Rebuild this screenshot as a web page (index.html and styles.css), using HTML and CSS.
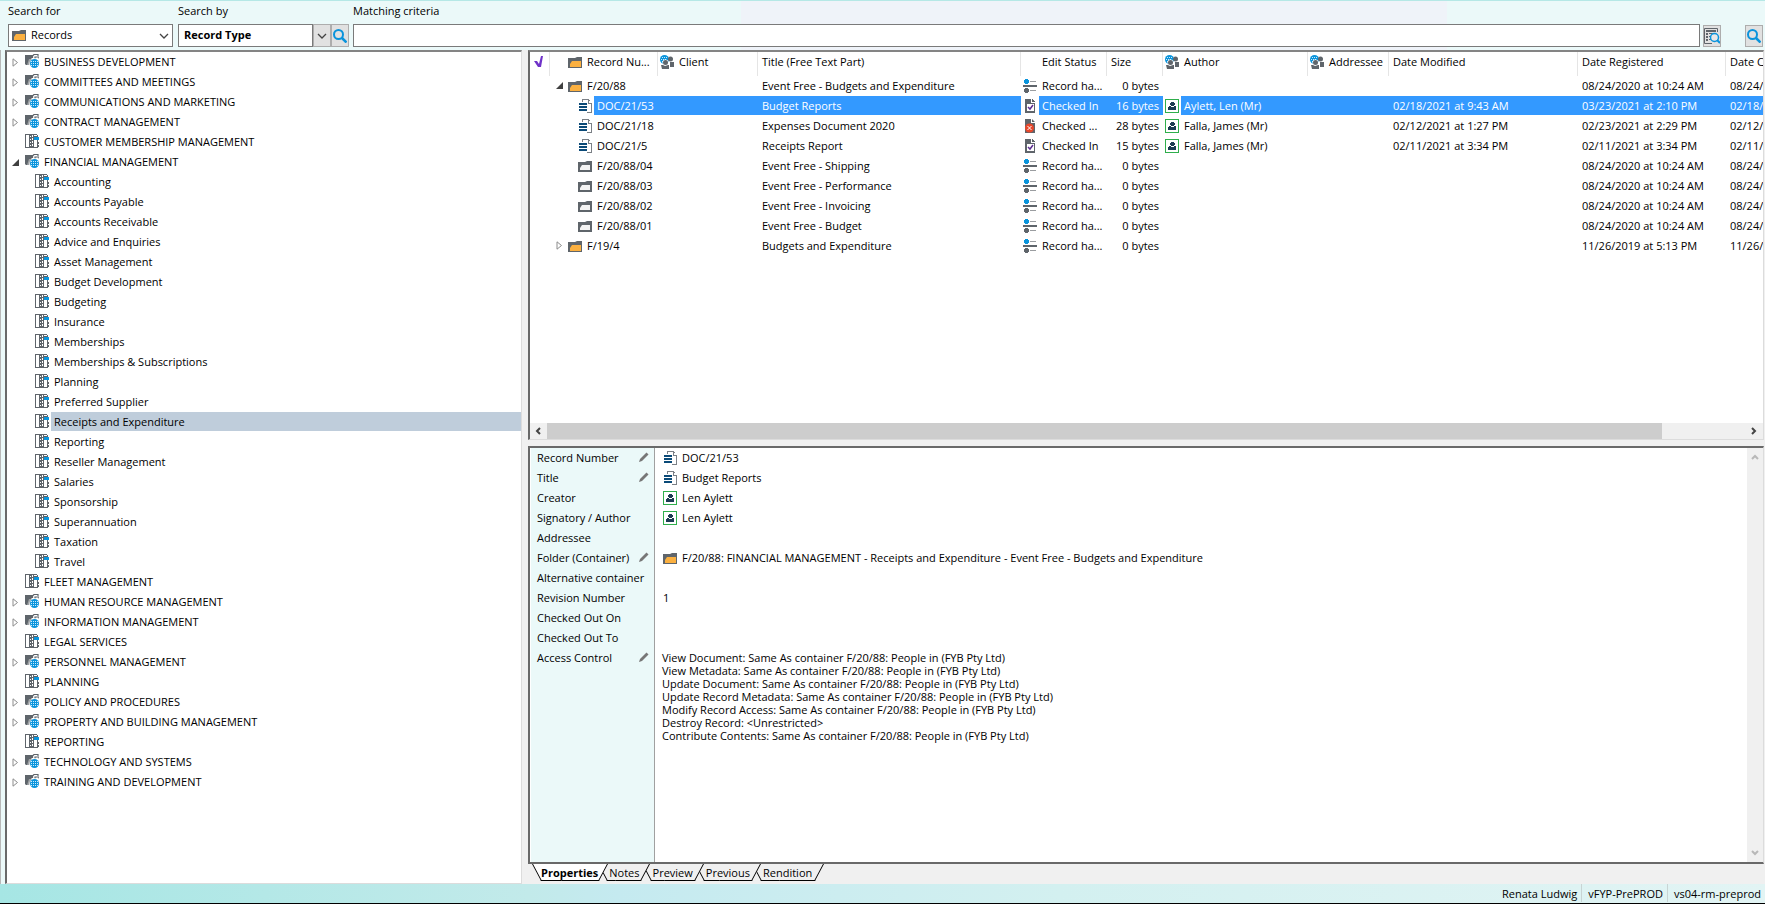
FILE: index.html
```html
<!DOCTYPE html>
<html lang="en">
<head>
    <meta charset="UTF-8">
    <meta name="viewport" content="width=device-width, initial-scale=1.0">
    <title>Records - Receipts and Expenditure</title>
    <link rel="stylesheet" href="styles.css">
</head>
<body>
    <!-- icon sprite -->
    <svg class="sprite" xmlns="http://www.w3.org/2000/svg">
        <symbol id="i-folder" viewBox="0 0 14 14">
            <path d="M0 3h7l2-1h5v11H0z" fill="#5f656b"/>
            <path d="M4 6h9v6H2V9z" fill="#fbb040"/>
        </symbol>
        <symbol id="i-folder-open" viewBox="0 0 14 14">
            <path d="M0 3h7l2-1h5v11H0z" fill="#5f656b"/>
            <path d="M4 6h8v5H2V9z" fill="#f3f3f3"/>
        </symbol>
        <symbol id="i-class" viewBox="0 0 14 14">
            <path d="M0 1h8v2L6 5v3l-3 3H1L0 10z" fill="#5f656b"/>
            <path d="M4 5h5v4H6l-2 2H2z" fill="#9fa2a5"/>
            <path d="M7.500 4V2L9 .5h4v1.500M10 4.500V3h4v1.500" fill="none" stroke="#5f656b" stroke-width="1.200"/>
            <circle cx="9.500" cy="9.500" r="5" fill="#fff"/>
            <circle cx="9.500" cy="9.500" r="4.500" fill="#0a94dc"/>
            <path d="M6 7h1v1H6zM8 7h1v1H8zM10 7h1v1h-1zM12 7h1v1h-1zM6 9h1v1H6zM8 9h1v1H8zM10 9h1v1h-1zM12 9h1v1h-1zM6 11h1v1H6zM8 11h1v1H8zM10 11h1v1h-1zM12 11h1v1h-1z" fill="#cdebfa"/>
        </symbol>
        <symbol id="i-plan" viewBox="0 0 14 14" shape-rendering="crispEdges">
            <path d="M0 0h5v14H0z" fill="#5f656b"/>
            <path d="M1 1h3v12H1z" fill="#fff"/>
            <path d="M5 0h4v14H5z" fill="#5f656b"/>
            <path d="M5 2h1v1H5zM5 5h1v1H5zM5 8h1v1H5zM5 11h1v1H5zM7 1h1v2H7zM7 4h1v2H7zM7 7h1v2H7zM7 10h1v2H7z" fill="#fff"/>
            <path d="M9 0h3v1h1v13H9z" fill="#5f656b"/>
            <path d="M9 1h3v1H9zM9 6h3v7H9z" fill="#fff"/>
            <path d="M9 3h5v3H9z" fill="#0a94dc"/>
            <path d="M13 8h1v2h-1zM13 11h1v2h-1z" fill="#5f656b"/>
        </symbol>
        <symbol id="i-people" viewBox="0 0 14 14">
            <circle cx="4.500" cy="4.500" r="4.500" fill="#0a94dc"/>
            <path d="M2 2h1v1H2zM4 2h1v1H4zM6 2h1v1H6zM1 4h1v1H1zM3 4h1v1H3zM5 4h1v1H5zM2 6h1v1H2z" fill="#cdebfa"/>
            <circle cx="10.500" cy="4" r="2.500" fill="#5f656b"/>
            <circle cx="5.500" cy="7.500" r="3" fill="#fff"/>
            <circle cx="5.500" cy="7.500" r="2.500" fill="#5f656b"/>
            <path d="M1 10h2l2 1 3-1h1v4H2zM10 7h4v5h-4z" fill="#5f656b"/>
        </symbol>
        <symbol id="i-doc" viewBox="0 0 14 14" shape-rendering="crispEdges">
            <path d="M4 0h7v1H5v2H4zM11 1h1v1h-1zM10 1h1v3h3v10H9v-1h4V5h-3z" fill="#7b8086"/>
            <path d="M1 4h8v2H1zM1 7h8v2H1zM1 10h8v2H1z" fill="#0b4a78"/>
        </symbol>
        <symbol id="i-status" viewBox="0 0 14 14" shape-rendering="crispEdges">
            <path d="M2 0h3v1h1v3H5v1H2V4H1V1h1z" fill="#0a94dc"/>
            <path d="M7 2h6v1H7zM7 11h6v1H7z" fill="#9a9da0"/>
            <path d="M0 6h14v2H0zM2 9h3v1h1v3H5v1H2v-1H1v-3h1z" fill="#5f656b"/>
        </symbol>
        <symbol id="i-checked" viewBox="0 0 14 14" shape-rendering="crispEdges">
            <path d="M2 0h6v4h4v10H2zM9 0l3 3H9z" fill="#5f656b"/>
            <path d="M4 5h7v7H4z" fill="#fff"/>
            <path d="M5 8l2 2 3-4" fill="none" stroke="#5c2d91" stroke-width="1.500" shape-rendering="auto"/>
        </symbol>
        <symbol id="i-out" viewBox="0 0 14 14">
            <path d="M2 0h6v4h4v10H2zM9 0l3 3H9z" fill="#5f656b"/>
            <circle cx="6.500" cy="9" r="4.500" fill="#e8472b"/>
            <path d="M4.500 7l4 4m0-4l-4 4" stroke="#fff"/>
        </symbol>
        <symbol id="i-person" viewBox="0 0 14 14" shape-rendering="crispEdges">
            <path d="M0 0h14v14H0z" fill="#2fae4c"/>
            <path d="M1 1h12v12H1z" fill="#fff"/>
            <path d="M6 3h3v1h1v2H9v1H6V6H5V4h1zM4 7h2v1h3V7h1l1 1v3H3V8z" fill="#1d3b52"/>
        </symbol>
        <symbol id="i-search" viewBox="0 0 14 14">
            <circle cx="5.500" cy="5.500" r="4.500" fill="none" stroke="#0a94dc" stroke-width="2"/>
            <path d="M9 9l4.500 4.500" stroke="#0a94dc" stroke-width="2.500"/>
        </symbol>
        <symbol id="i-form" viewBox="0 0 16 16">
            <path d="M13.500 4V.5H.5v15H8" fill="none" stroke="#5f656b"/>
            <path d="M2 2h10v2H2zM2 5h2v2H2zM2 8h2v2H2zM2 11h2v2H2zM5 5h4v1H5zM5 8h2v1H5zM5 11h2v1H5z" fill="#5f656b"/>
            <circle cx="10.500" cy="9.500" r="4" fill="#e9e9e9" stroke="#0a94dc" stroke-width="1.500"/>
            <path d="M13 12l3 3" stroke="#0a94dc" stroke-width="2"/>
        </symbol>
        <symbol id="i-pencil" viewBox="0 0 10 10">
            <path d="M0 10l1-3 6.500-6.500 2 2L3 9z" fill="#777"/>
        </symbol>
        <symbol id="i-tick" viewBox="0 0 10 12">
            <path d="M0 5h3l2 3 2-8h2L7 11H4z" fill="#6f32c8"/>
        </symbol>
        <symbol id="i-closed" viewBox="0 0 7 9">
            <path d="M1 .8v7.400L5.500 4.500z" fill="#fff" stroke="#8c8c8c"/>
        </symbol>
        <symbol id="i-opened" viewBox="0 0 7 9">
            <path d="M7 1v7H0z" fill="#404040"/>
        </symbol>
        <symbol id="i-chev" viewBox="0 0 10 10">
            <path d="M1 3l4 4 4-4" fill="none" stroke="currentColor" stroke-width="1.300"/>
        </symbol>
        <symbol id="i-arrow" viewBox="0 0 10 10">
            <path d="M2 3l3 3 3-3" fill="none" stroke="currentColor" stroke-width="2"/>
        </symbol>
    </svg>

    <form class="toolbar">
        <div class="field for">
            <label for="searchFor">Search for</label>
            <div class="combo">
                <svg class="icon"><use href="#i-folder"/></svg>
                <select id="searchFor"><option>Records</option></select>
                <svg class="chev"><use href="#i-chev"/></svg>
            </div>
        </div>
        <div class="field by">
            <label for="searchBy">Search by</label>
            <div class="combo">
                <input type="text" id="searchBy" value="Record Type">
                <button type="button" class="tool" aria-label="Search methods"><svg class="chev"><use href="#i-chev"/></svg></button>
                <button type="button" class="tool" aria-label="Find method"><svg class="icon"><use href="#i-search"/></svg></button>
            </div>
        </div>
        <div class="field criteria">
            <label for="criteria">Matching criteria</label>
            <div class="combo"><input type="text" id="criteria"></div>
        </div>
        <button type="button" class="tool" aria-label="Search form"><svg class="icon-form"><use href="#i-form"/></svg></button>
        <button type="submit" class="tool go" aria-label="Search"><svg class="icon"><use href="#i-search"/></svg></button>
    </form>

    <main class="main">
        <ul class="tree">
            <li><svg class="twist"><use href="#i-closed"/></svg><svg class="icon"><use href="#i-class"/></svg><span>BUSINESS DEVELOPMENT</span></li>
            <li><svg class="twist"><use href="#i-closed"/></svg><svg class="icon"><use href="#i-class"/></svg><span>COMMITTEES AND MEETINGS</span></li>
            <li><svg class="twist"><use href="#i-closed"/></svg><svg class="icon"><use href="#i-class"/></svg><span>COMMUNICATIONS AND MARKETING</span></li>
            <li><svg class="twist"><use href="#i-closed"/></svg><svg class="icon"><use href="#i-class"/></svg><span>CONTRACT MANAGEMENT</span></li>
            <li class="leaf"><svg class="icon"><use href="#i-plan"/></svg><span>CUSTOMER MEMBERSHIP MANAGEMENT</span></li>
            <li><svg class="twist"><use href="#i-opened"/></svg><svg class="icon"><use href="#i-class"/></svg><span>FINANCIAL MANAGEMENT</span></li>
            <li class="child"><svg class="icon"><use href="#i-plan"/></svg><span>Accounting</span></li>
            <li class="child"><svg class="icon"><use href="#i-plan"/></svg><span>Accounts Payable</span></li>
            <li class="child"><svg class="icon"><use href="#i-plan"/></svg><span>Accounts Receivable</span></li>
            <li class="child"><svg class="icon"><use href="#i-plan"/></svg><span>Advice and Enquiries</span></li>
            <li class="child"><svg class="icon"><use href="#i-plan"/></svg><span>Asset Management</span></li>
            <li class="child"><svg class="icon"><use href="#i-plan"/></svg><span>Budget Development</span></li>
            <li class="child"><svg class="icon"><use href="#i-plan"/></svg><span>Budgeting</span></li>
            <li class="child"><svg class="icon"><use href="#i-plan"/></svg><span>Insurance</span></li>
            <li class="child"><svg class="icon"><use href="#i-plan"/></svg><span>Memberships</span></li>
            <li class="child"><svg class="icon"><use href="#i-plan"/></svg><span>Memberships &amp; Subscriptions</span></li>
            <li class="child"><svg class="icon"><use href="#i-plan"/></svg><span>Planning</span></li>
            <li class="child"><svg class="icon"><use href="#i-plan"/></svg><span>Preferred Supplier</span></li>
            <li class="child current"><svg class="icon"><use href="#i-plan"/></svg><span>Receipts and Expenditure</span></li>
            <li class="child"><svg class="icon"><use href="#i-plan"/></svg><span>Reporting</span></li>
            <li class="child"><svg class="icon"><use href="#i-plan"/></svg><span>Reseller Management</span></li>
            <li class="child"><svg class="icon"><use href="#i-plan"/></svg><span>Salaries</span></li>
            <li class="child"><svg class="icon"><use href="#i-plan"/></svg><span>Sponsorship</span></li>
            <li class="child"><svg class="icon"><use href="#i-plan"/></svg><span>Superannuation</span></li>
            <li class="child"><svg class="icon"><use href="#i-plan"/></svg><span>Taxation</span></li>
            <li class="child"><svg class="icon"><use href="#i-plan"/></svg><span>Travel</span></li>
            <li class="leaf"><svg class="icon"><use href="#i-plan"/></svg><span>FLEET MANAGEMENT</span></li>
            <li><svg class="twist"><use href="#i-closed"/></svg><svg class="icon"><use href="#i-class"/></svg><span>HUMAN RESOURCE MANAGEMENT</span></li>
            <li><svg class="twist"><use href="#i-closed"/></svg><svg class="icon"><use href="#i-class"/></svg><span>INFORMATION MANAGEMENT</span></li>
            <li class="leaf"><svg class="icon"><use href="#i-plan"/></svg><span>LEGAL SERVICES</span></li>
            <li><svg class="twist"><use href="#i-closed"/></svg><svg class="icon"><use href="#i-class"/></svg><span>PERSONNEL MANAGEMENT</span></li>
            <li class="leaf"><svg class="icon"><use href="#i-plan"/></svg><span>PLANNING</span></li>
            <li><svg class="twist"><use href="#i-closed"/></svg><svg class="icon"><use href="#i-class"/></svg><span>POLICY AND PROCEDURES</span></li>
            <li><svg class="twist"><use href="#i-closed"/></svg><svg class="icon"><use href="#i-class"/></svg><span>PROPERTY AND BUILDING MANAGEMENT</span></li>
            <li class="leaf"><svg class="icon"><use href="#i-plan"/></svg><span>REPORTING</span></li>
            <li><svg class="twist"><use href="#i-closed"/></svg><svg class="icon"><use href="#i-class"/></svg><span>TECHNOLOGY AND SYSTEMS</span></li>
            <li><svg class="twist"><use href="#i-closed"/></svg><svg class="icon"><use href="#i-class"/></svg><span>TRAINING AND DEVELOPMENT</span></li>
        </ul>

        <div class="right">
            <section class="list">
                <div class="list-view">
                    <table class="records">
                        <colgroup>
                            <col class="c-tick"><col class="c-number"><col class="c-client"><col class="c-title"><col class="c-status">
                            <col class="c-size"><col class="c-author"><col class="c-addressee"><col class="c-modified"><col class="c-registered"><col class="c-created">
                        </colgroup>
                        <thead>
                            <tr>
                                <th><div class="cell tick"><svg><use href="#i-tick"/></svg></div></th>
                                <th><div class="cell top"><svg class="icon"><use href="#i-folder"/></svg><span>Record Nu...</span></div></th>
                                <th><div class="cell"><svg class="icon"><use href="#i-people"/></svg><span>Client</span></div></th>
                                <th><div class="cell"><span>Title (Free Text Part)</span></div></th>
                                <th><div class="cell noicon"><span>Edit Status</span></div></th>
                                <th><div class="cell"><span>Size</span></div></th>
                                <th><div class="cell"><svg class="icon"><use href="#i-people"/></svg><span>Author</span></div></th>
                                <th><div class="cell"><svg class="icon"><use href="#i-people"/></svg><span>Addressee</span></div></th>
                                <th><div class="cell"><span>Date Modified</span></div></th>
                                <th><div class="cell"><span>Date Registered</span></div></th>
                                <th><div class="cell"><span>Date Created</span></div></th>
                            </tr>
                        </thead>
                        <tbody>
                            <tr>
                                <td></td>
                                <td><div class="cell"><svg class="twist"><use href="#i-opened"/></svg><svg class="icon"><use href="#i-folder"/></svg><span>F/20/88</span></div></td>
                                <td></td>
                                <td><div class="cell"><span>Event Free - Budgets and Expenditure</span></div></td>
                                <td><div class="cell"><svg class="icon"><use href="#i-status"/></svg><span>Record ha...</span></div></td>
                                <td><div class="cell size"><span>0 bytes</span></div></td>
                                <td></td><td></td><td></td>
                                <td><div class="cell"><span>08/24/2020 at 10:24 AM</span></div></td>
                                <td><div class="cell"><span>08/24/2020</span></div></td>
                            </tr>
                            <tr class="selected">
                                <td></td>
                                <td><div class="cell sub"><svg class="icon"><use href="#i-doc"/></svg><span>DOC/21/53</span></div></td>
                                <td></td>
                                <td><div class="cell"><span>Budget Reports</span></div></td>
                                <td><div class="cell"><svg class="icon"><use href="#i-checked"/></svg><span>Checked In</span></div></td>
                                <td><div class="cell size"><span>16 bytes</span></div></td>
                                <td><div class="cell"><svg class="icon"><use href="#i-person"/></svg><span>Aylett, Len (Mr)</span></div></td>
                                <td></td>
                                <td><div class="cell"><span>02/18/2021 at 9:43 AM</span></div></td>
                                <td><div class="cell"><span>03/23/2021 at 2:10 PM</span></div></td>
                                <td><div class="cell"><span>02/18/2021</span></div></td>
                            </tr>
                            <tr>
                                <td></td>
                                <td><div class="cell sub"><svg class="icon"><use href="#i-doc"/></svg><span>DOC/21/18</span></div></td>
                                <td></td>
                                <td><div class="cell"><span>Expenses Document 2020</span></div></td>
                                <td><div class="cell"><svg class="icon"><use href="#i-out"/></svg><span>Checked ...</span></div></td>
                                <td><div class="cell size"><span>28 bytes</span></div></td>
                                <td><div class="cell"><svg class="icon"><use href="#i-person"/></svg><span>Falla, James (Mr)</span></div></td>
                                <td></td>
                                <td><div class="cell"><span>02/12/2021 at 1:27 PM</span></div></td>
                                <td><div class="cell"><span>02/23/2021 at 2:29 PM</span></div></td>
                                <td><div class="cell"><span>02/12/2021</span></div></td>
                            </tr>
                            <tr>
                                <td></td>
                                <td><div class="cell sub"><svg class="icon"><use href="#i-doc"/></svg><span>DOC/21/5</span></div></td>
                                <td></td>
                                <td><div class="cell"><span>Receipts Report</span></div></td>
                                <td><div class="cell"><svg class="icon"><use href="#i-checked"/></svg><span>Checked In</span></div></td>
                                <td><div class="cell size"><span>15 bytes</span></div></td>
                                <td><div class="cell"><svg class="icon"><use href="#i-person"/></svg><span>Falla, James (Mr)</span></div></td>
                                <td></td>
                                <td><div class="cell"><span>02/11/2021 at 3:34 PM</span></div></td>
                                <td><div class="cell"><span>02/11/2021 at 3:34 PM</span></div></td>
                                <td><div class="cell"><span>02/11/2021</span></div></td>
                            </tr>
                            <tr>
                                <td></td>
                                <td><div class="cell sub"><svg class="icon"><use href="#i-folder-open"/></svg><span>F/20/88/04</span></div></td>
                                <td></td>
                                <td><div class="cell"><span>Event Free - Shipping</span></div></td>
                                <td><div class="cell"><svg class="icon"><use href="#i-status"/></svg><span>Record ha...</span></div></td>
                                <td><div class="cell size"><span>0 bytes</span></div></td>
                                <td></td><td></td><td></td>
                                <td><div class="cell"><span>08/24/2020 at 10:24 AM</span></div></td>
                                <td><div class="cell"><span>08/24/2020</span></div></td>
                            </tr>
                            <tr>
                                <td></td>
                                <td><div class="cell sub"><svg class="icon"><use href="#i-folder-open"/></svg><span>F/20/88/03</span></div></td>
                                <td></td>
                                <td><div class="cell"><span>Event Free - Performance</span></div></td>
                                <td><div class="cell"><svg class="icon"><use href="#i-status"/></svg><span>Record ha...</span></div></td>
                                <td><div class="cell size"><span>0 bytes</span></div></td>
                                <td></td><td></td><td></td>
                                <td><div class="cell"><span>08/24/2020 at 10:24 AM</span></div></td>
                                <td><div class="cell"><span>08/24/2020</span></div></td>
                            </tr>
                            <tr>
                                <td></td>
                                <td><div class="cell sub"><svg class="icon"><use href="#i-folder-open"/></svg><span>F/20/88/02</span></div></td>
                                <td></td>
                                <td><div class="cell"><span>Event Free - Invoicing</span></div></td>
                                <td><div class="cell"><svg class="icon"><use href="#i-status"/></svg><span>Record ha...</span></div></td>
                                <td><div class="cell size"><span>0 bytes</span></div></td>
                                <td></td><td></td><td></td>
                                <td><div class="cell"><span>08/24/2020 at 10:24 AM</span></div></td>
                                <td><div class="cell"><span>08/24/2020</span></div></td>
                            </tr>
                            <tr>
                                <td></td>
                                <td><div class="cell sub"><svg class="icon"><use href="#i-folder-open"/></svg><span>F/20/88/01</span></div></td>
                                <td></td>
                                <td><div class="cell"><span>Event Free - Budget</span></div></td>
                                <td><div class="cell"><svg class="icon"><use href="#i-status"/></svg><span>Record ha...</span></div></td>
                                <td><div class="cell size"><span>0 bytes</span></div></td>
                                <td></td><td></td><td></td>
                                <td><div class="cell"><span>08/24/2020 at 10:24 AM</span></div></td>
                                <td><div class="cell"><span>08/24/2020</span></div></td>
                            </tr>
                            <tr>
                                <td></td>
                                <td><div class="cell"><svg class="twist"><use href="#i-closed"/></svg><svg class="icon"><use href="#i-folder"/></svg><span>F/19/4</span></div></td>
                                <td></td>
                                <td><div class="cell"><span>Budgets and Expenditure</span></div></td>
                                <td><div class="cell"><svg class="icon"><use href="#i-status"/></svg><span>Record ha...</span></div></td>
                                <td><div class="cell size"><span>0 bytes</span></div></td>
                                <td></td><td></td><td></td>
                                <td><div class="cell"><span>11/26/2019 at 5:13 PM</span></div></td>
                                <td><div class="cell"><span>11/26/2019</span></div></td>
                            </tr>
                        </tbody>
                    </table>
                </div>
                <div class="hscroll">
                    <svg class="chev left"><use href="#i-arrow"/></svg>
                    <div class="track"><div class="thumb"></div></div>
                    <svg class="chev right-arrow"><use href="#i-arrow"/></svg>
                </div>
            </section>

            <section class="detail">
                <dl class="props">
                    <dt>Record Number<svg class="pencil"><use href="#i-pencil"/></svg></dt>
                    <dd><svg class="icon"><use href="#i-doc"/></svg>DOC/21/53</dd>
                    <dt>Title<svg class="pencil"><use href="#i-pencil"/></svg></dt>
                    <dd><svg class="icon"><use href="#i-doc"/></svg>Budget Reports</dd>
                    <dt>Creator</dt>
                    <dd><svg class="icon"><use href="#i-person"/></svg>Len Aylett</dd>
                    <dt>Signatory / Author</dt>
                    <dd><svg class="icon"><use href="#i-person"/></svg>Len Aylett</dd>
                    <dt>Addressee</dt>
                    <dd></dd>
                    <dt>Folder (Container)<svg class="pencil"><use href="#i-pencil"/></svg></dt>
                    <dd><svg class="icon"><use href="#i-folder"/></svg>F/20/88: FINANCIAL MANAGEMENT - Receipts and Expenditure - Event Free - Budgets and Expenditure</dd>
                    <dt>Alternative container</dt>
                    <dd></dd>
                    <dt>Revision Number</dt>
                    <dd>1</dd>
                    <dt>Checked Out On</dt>
                    <dd></dd>
                    <dt>Checked Out To</dt>
                    <dd></dd>
                    <dt>Access Control<svg class="pencil"><use href="#i-pencil"/></svg></dt>
                    <dd class="access">View Document: Same As container F/20/88: People in (FYB Pty Ltd)<br>View Metadata: Same As container F/20/88: People in (FYB Pty Ltd)<br>Update Document: Same As container F/20/88: People in (FYB Pty Ltd)<br>Update Record Metadata: Same As container F/20/88: People in (FYB Pty Ltd)<br>Modify Record Access: Same As container F/20/88: People in (FYB Pty Ltd)<br>Destroy Record: &lt;Unrestricted&gt;<br>Contribute Contents: Same As container F/20/88: People in (FYB Pty Ltd)</dd>
                </dl>
                <div class="vscroll">
                    <svg class="chev up"><use href="#i-arrow"/></svg>
                    <svg class="chev"><use href="#i-arrow"/></svg>
                </div>
            </section>

            <nav class="tabs">
                <button type="button" class="tab active"><span>Properties</span></button>
                <button type="button" class="tab"><span>Notes</span></button>
                <button type="button" class="tab"><span>Preview</span></button>
                <button type="button" class="tab"><span>Previous</span></button>
                <button type="button" class="tab"><span>Rendition</span></button>
            </nav>
        </div>
    </main>

    <footer class="status">
        <span>Renata Ludwig</span>
        <span>vFYP-PrePROD</span>
        <span>vs04-rm-preprod</span>
    </footer>
</body>
</html>
```
FILE: styles.css
```css
* {
    box-sizing: border-box;
}
body {
    margin: 0;
    height: 100vh;
    display: flex;
    flex-direction: column;
    overflow: hidden;
    font-family: "Open Sans", "Noto Sans", sans-serif;
    font-size: 11px;
    line-height: 20px;
    color: #000;
    background: #ebf9f9;
}
button, input, select {
    font: inherit;
    color: inherit;
}
.sprite {
    position: absolute;
    width: 0;
    height: 0;
}
.icon {
    width: 14px;
    height: 14px;
    flex: none;
}
.chev {
    width: 10px;
    height: 10px;
    flex: none;
    color: #444;
}

/* search toolbar */
.toolbar {
    display: flex;
    align-items: flex-end;
    height: 50px;
    padding: 0 2px 3px 8px;
    border-top: 1px solid #b5e8e6;
    background: linear-gradient(to right, #ebf9f9 42%, #eff3f9 42%, #eff3f9 82%, #ebf9f9 82%);
}
.field label {
    display: block;
    height: 23px;
}
.for {
    width: 165px;
    margin-right: 5px;
}
.by {
    width: 171px;
    margin-right: 4px;
}
.criteria {
    flex: 1;
    margin-right: 3px;
}
.combo {
    position: relative;
    display: flex;
    height: 23px;
}
.combo input, .combo select {
    flex: 1;
    min-width: 0;
    padding: 0 5px 2px;
    border: 1px solid #7a7a7a;
    border-radius: 0;
    background: #fff;
    appearance: none;
    outline: none;
}
.combo select {
    padding-left: 22px;
}
.combo > .icon {
    position: absolute;
    left: 4px;
    top: 4px;
}
.combo > .chev {
    position: absolute;
    right: 4px;
    top: 7px;
}
#searchBy {
    font-weight: bold;
}
.tool {
    display: flex;
    align-items: center;
    justify-content: center;
    width: 18px;
    height: 22px;
    padding: 0;
    border: 1px solid #adadad;
    background: #e1e1e1;
}
.combo .tool {
    height: 23px;
}
.icon-form {
    width: 16px;
    height: 16px;
}
.go {
    margin-left: 24px;
}

/* panes */
.main {
    flex: 1;
    min-height: 0;
    display: flex;
    padding-left: 4px;
    border-left: 1px solid #b8b8b8;
}
.tree {
    width: 517px;
    margin: 0;
    padding: 0;
    list-style: none;
    background: #fff;
    border: 2px solid #696969;
    border-top-color: #848484;
    border-right: 1px solid #dcdcdc;
    border-bottom: 1px solid #dcdcdc;
}
.tree li {
    display: flex;
    align-items: center;
    height: 20px;
    padding-left: 5px;
}
.twist {
    width: 7px;
    height: 9px;
    margin-right: 6px;
    flex: none;
}
.tree .icon {
    margin: 0 2px 2px 0;
}
.tree span {
    flex: 1;
    align-self: flex-start;
    padding-left: 3px;
    line-height: 19px;
}
.tree .leaf {
    padding-left: 18px;
}
.tree .child {
    padding-left: 28px;
}
.current span {
    background: #bfcddb;
}
.right {
    flex: 1;
    min-width: 0;
    display: flex;
    flex-direction: column;
    padding-left: 6px;
    background: #f0f0f0;
}

/* record list */
.list {
    height: 390px;
    display: flex;
    flex-direction: column;
    margin-right: 1px;
    background: #fff;
    border: 2px solid #696969;
    border-top-color: #848484;
    border-right: 1px solid #dcdcdc;
    border-bottom: 1px solid #dcdcdc;
}
.list-view {
    flex: 1;
    min-height: 0;
    overflow: hidden;
}
.records {
    table-layout: fixed;
    width: 1316px;
    border-collapse: separate;
    border-spacing: 0;
}
.c-tick { width: 20px; }
.c-number { width: 108px; }
.c-client { width: 100px; }
.c-title { width: 263px; }
.c-status { width: 86px; }
.c-size { width: 56px; }
.c-author { width: 145px; }
.c-addressee { width: 81px; }
.c-modified { width: 189px; }
.c-registered { width: 148px; }
.c-created { width: 120px; }
.records th {
    height: 24px;
    padding: 0;
    border-right: 1px solid #e5e5e5;
    font-weight: normal;
    text-align: left;
    vertical-align: top;
}
.records td {
    height: 20px;
    padding: 0;
    border-bottom: 1px solid #fff;
}
.cell {
    display: flex;
    align-items: center;
    height: 20px;
    padding-left: 2px;
}
td .cell {
    height: 19px;
    line-height: 19px;
}
.cell span {
    flex: 1;
    padding-left: 2px;
    white-space: nowrap;
}
.cell .icon + span {
    margin-left: 2px;
    padding-left: 3px;
}
.cell.top {
    padding-left: 18px;
}
.cell.noicon {
    padding-left: 19px;
}
.cell .twist {
    margin-left: 4px;
    margin-right: 5px;
}
.cell.sub {
    padding-left: 28px;
}
.tick svg {
    width: 10px;
    height: 12px;
    margin-left: 2px;
}
.size {
    padding-right: 4px;
    text-align: right;
}
.selected td {
    background: #3399ff;
    color: #fff;
}
.selected td:first-child, .selected .cell:has(.icon) {
    background: #fff;
}
.selected .icon + span {
    background: #3399ff;
}
.hscroll {
    display: flex;
    align-items: center;
    height: 16px;
    background: #f0f0f0;
}
.track {
    flex: 1;
    height: 16px;
}
.thumb {
    width: 93%;
    height: 16px;
    background: #cdcdcd;
}
.hscroll .chev {
    margin: 0 4px 0 3px;
}
.left {
    transform: rotate(90deg);
}
.right-arrow {
    transform: rotate(-90deg);
}

/* properties */
.detail {
    flex: 1;
    min-height: 0;
    display: flex;
    margin: 6px 1px 0 0;
    background: #fff;
    border: 2px solid #696969;
    border-right: 1px solid #dcdcdc;
}
.props {
    flex: 1;
    display: grid;
    grid-template-columns: 124px 1fr;
    grid-template-rows: repeat(10, 20px) 1fr;
    margin: 0 0 0 1px;
}
.props dt {
    display: flex;
    justify-content: space-between;
    padding: 0 5px 0 6px;
    background: #ebf9f9;
    border-right: 1px solid #a0a0a0;
}
.pencil {
    width: 10px;
    height: 10px;
    margin-top: 4px;
}
.props dd {
    display: flex;
    align-items: center;
    margin: 0;
    padding-left: 8px;
}
.props dd .icon {
    margin-right: 5px;
}
.props .access {
    display: block;
    padding-top: 3px;
    padding-left: 7px;
    line-height: 13px;
}
.vscroll {
    display: flex;
    flex-direction: column;
    align-items: center;
    justify-content: space-between;
    width: 16px;
    padding: 4px 0;
    background: #f0f0f0;
}
.vscroll .chev {
    color: #b8b8b8;
}
.up {
    transform: rotate(180deg);
}

/* slanted tabs */
.tabs {
    display: flex;
    height: 20px;
    padding-left: 4px;
}
.tab {
    position: relative;
    z-index: 1;
    height: 17px;
    margin-right: -9px;
    padding: 0 11px;
    border: 0;
    background: none;
    line-height: 17px;
}
.tab span {
    position: relative;
    z-index: 1;
}
.tab::before, .tab::after {
    content: "";
    position: absolute;
    top: 0;
    bottom: 0;
    background: #f0f0f0;
    border-bottom: 1px solid #000;
}
.tab::before {
    left: 0;
    right: 50%;
    border-left: 1px solid #000;
    transform: skewX(28deg);
    transform-origin: top;
}
.tab::after {
    left: 50%;
    right: 0;
    border-right: 1px solid #000;
    transform: skewX(-28deg);
    transform-origin: top;
}
.tab:nth-child(1) { z-index: 5; }
.tab:nth-child(2) { z-index: 4; }
.tab:nth-child(3) { z-index: 3; }
.tab:nth-child(4) { z-index: 2; }
.active {
    padding: 0 9px;
    font-weight: bold;
}
.active::before, .active::after {
    background: #fff;
}

/* status bar */
.status {
    display: flex;
    justify-content: flex-end;
    height: 20px;
    border-bottom: 1px solid #000;
    background: linear-gradient(to right, #a6e6e4, #c2eaea 30%, #c5eaf0 35%, #d3f0f0 60%, #e2f4f4);
}
.status span {
    height: 18px;
    padding: 0 4px 0 6px;
    border-left: 1px solid #c8d4d4;
}
.status span:first-child {
    border: 0;
}
```
